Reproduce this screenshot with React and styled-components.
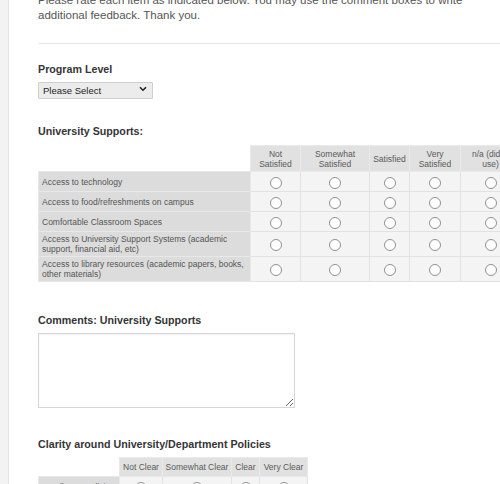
import React from 'react';
import styled, {createGlobalStyle} from 'styled-components';

const GlobalStyle = createGlobalStyle`
  html, body {
    margin: 0;
    padding: 0;
    background: #f3f3f3;
    overflow: hidden;
  }
  body {
    font-family: "Liberation Sans", Arial, sans-serif;
  }
`;

const Sheet = styled.div`
  margin-left: 8px;
  min-height: 484px;
  border-left: 1px solid #e4e4e4;
  background: #fff;
  padding-left: 29px;
`;

const Intro = styled.p`
  margin: -7px 0 0;
  max-width: 450px;
  font-size: 11.5px;
  line-height: 14.5px;
  color: #555;
`;

const Rule = styled.hr`
  margin: 21px 0 0;
  border: 0;
  height: 1px;
  background: #e8e8e8;
`;

const Heading = styled.h3`
  margin: ${({$gap}) => $gap}px 0 0;
  font-size: 10.7px;
  line-height: 13px;
  font-weight: bold;
  color: #353535;
`;

const SelectWrap = styled.div`
  position: relative;
  width: 115px;
  height: 17px;
  margin-top: 4px;

  svg {
    position: absolute;
    right: 6px;
    top: 6px;
    pointer-events: none;
  }
`;

const Select = styled.select`
  appearance: none;
  box-sizing: border-box;
  width: 100%;
  height: 100%;
  margin: 0;
  padding: 0 0 0 4px;
  border: 1px solid #cfcfcf;
  border-radius: 1px;
  background: #ececec;
  font-family: "Liberation Sans", Arial, sans-serif;
  font-size: 9.5px;
  color: #222;
`;

const Matrix = styled.table`
  margin-top: ${({$gap}) => $gap}px;
  border-collapse: collapse;
  table-layout: fixed;
  font-size: 8.5px;
  line-height: 10px;
  color: #555;
`;

const HeadRow = styled.tr`
  height: ${({$h}) => $h}px;
`;

const Row = styled.tr`
  height: ${({$tall}) => ($tall ? 25 : 20)}px;
`;

const Corner = styled.th`
  padding: 0;
  background: #fff;
  border: 0;
`;

const HeadCell = styled.th`
  padding: 0 2px;
  font-weight: normal;
  text-align: center;
  color: #5a5a5a;
  background: #e1e1e1;
  border: 1px solid #e9e9e9;
`;

const LabelCell = styled.td`
  padding: 1px 3px;
  background: #dcdcdc;
  border: 1px solid #e8e8e8;
  vertical-align: middle;
`;

const OptionCell = styled.td`
  padding: 0;
  text-align: center;
  vertical-align: middle;
  background: #f4f4f4;
  border: 1px solid #e2e2e2;
`;

const Radio = styled.span`
  display: inline-block;
  box-sizing: border-box;
  width: 12px;
  height: 12px;
  margin-top: 2px;
  border: 1px solid #919191;
  border-radius: 50%;
  background: #fff;
  vertical-align: middle;
`;

const CommentBox = styled.textarea`
  display: block;
  box-sizing: border-box;
  width: 257px;
  height: 75px;
  margin-top: 6px;
  border: 1px solid #d6d6d6;
  border-radius: 0;
  box-shadow: inset 0 1px 2px rgba(0, 0, 0, 0.06);
  background: #fff;
  font-family: "Liberation Sans", Arial, sans-serif;
  font-size: 10px;
  resize: both;
`;

const supportCols = [
    {label: ['Not', 'Satisfied'], w: 50},
    {label: ['Somewhat', 'Satisfied'], w: 69},
    {label: ['Satisfied'], w: 40},
    {label: ['Very', 'Satisfied'], w: 51},
    {label: ['n/a (didn\'t', 'use)'], w: 60},
];

const supportRows = [
    {text: 'Access to technology'},
    {text: 'Access to food/refreshments on campus'},
    {text: 'Comfortable Classroom Spaces'},
    {text: 'Access to University Support Systems (academic support, financial aid, etc)', tall: true},
    {text: 'Access to library resources (academic papers, books, other materials)', tall: true},
];

const policyCols = [
    {label: ['Not Clear'], w: 43},
    {label: ['Somewhat Clear'], w: 69},
    {label: ['Clear'], w: 28},
    {label: ['Very Clear'], w: 48},
];

const policyRows = [
    {text: 'Enrollment Policies'},
    {text: 'Grading Policies'},
];

const Chevron = () => (
    <svg width="8" height="6" viewBox="0 0 8 6">
        <path d="M1 1.2 L4 4.2 L7 1.2" fill="none" stroke="#222" strokeWidth="1.6"/>
    </svg>
);

const RatingTable = ({labelWidth, cols, rows, headHeight, gap}) => (
    <Matrix $gap={gap} style={{width: labelWidth + cols.reduce((s, c) => s + c.w, 0)}}>
        <colgroup>
            <col style={{width: labelWidth}}/>
            {cols.map((c, i) => <col key={i} style={{width: c.w}}/>)}
        </colgroup>
        <thead>
        <HeadRow $h={headHeight}>
            <Corner/>
            {cols.map((c, i) => (
                <HeadCell key={i}>
                    {c.label.map((l, j) => <div key={j}>{l}</div>)}
                </HeadCell>
            ))}
        </HeadRow>
        </thead>
        <tbody>
        {rows.map((r, i) => (
            <Row key={i} $tall={r.tall}>
                <LabelCell>{r.text}</LabelCell>
                {cols.map((c, j) => (
                    <OptionCell key={j}><Radio/></OptionCell>
                ))}
            </Row>
        ))}
        </tbody>
    </Matrix>
);

const App = () => {
    return (
        <>
            <GlobalStyle/>
            <Sheet>
                <Intro>
                    Please rate each item as indicated below. You may use the comment boxes to write
                    additional feedback. Thank you.
                </Intro>
                <Rule/>

                <Heading $gap={19}>Program Level</Heading>
                <SelectWrap>
                    <Select defaultValue="">
                        <option value="">Please Select</option>
                        <option value="ug">Undergraduate</option>
                        <option value="grad">Graduate</option>
                    </Select>
                    <Chevron/>
                </SelectWrap>

                <Heading $gap={28}>University Supports:</Heading>
                <RatingTable labelWidth={212} cols={supportCols} rows={supportRows} headHeight={26} gap={7}/>

                <Heading $gap={32}>Comments: University Supports</Heading>
                <CommentBox/>

                <Heading $gap={30}>Clarity around University/Department Policies</Heading>
                <RatingTable labelWidth={81} cols={policyCols} rows={policyRows} headHeight={19} gap={6}/>
            </Sheet>
        </>
    );
};

export default App;
